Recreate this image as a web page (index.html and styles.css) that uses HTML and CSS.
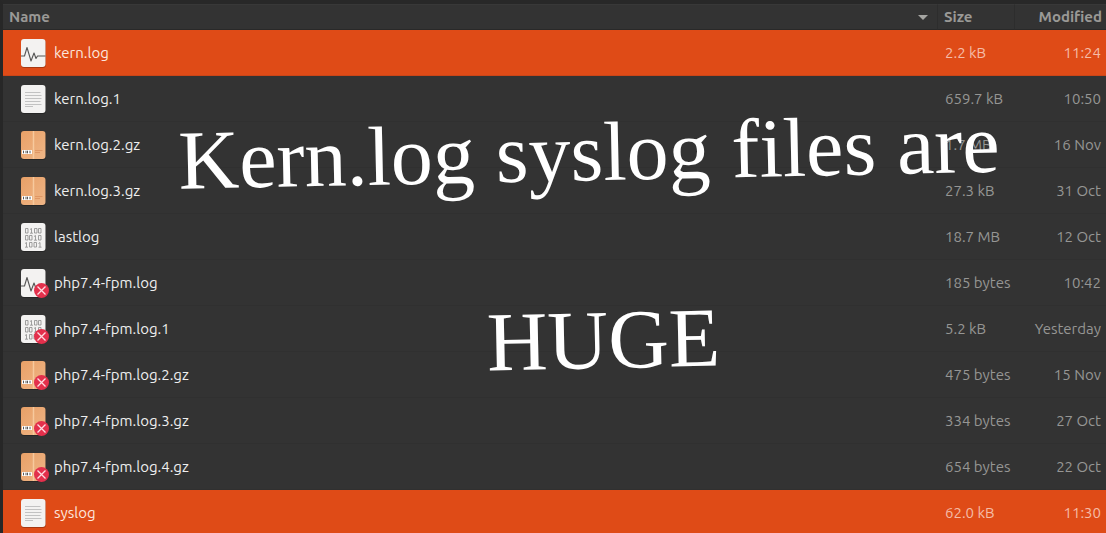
FILE: index.html
```html
<!DOCTYPE html>
<html lang="en">
<head>
<meta charset="utf-8">
<title>Log files</title>
<link rel="stylesheet" href="styles.css">
</head>
<body>
<svg class="defs" aria-hidden="true">
  <defs>
    <linearGradient id="box" x1="0" y1="0" x2="1" y2="1"><stop offset="0" stop-color="#e8a067"/><stop offset="1" stop-color="#efb687"/></linearGradient>
    <symbol id="sheet" viewBox="0 0 28 30"><rect x="0" y="1.5" width="25" height="28.5" rx="3.5" fill="#000" opacity=".25"/><rect x="0" y="1" width="24.5" height="28" rx="3" fill="#f3f2f1"/></symbol>
    <symbol id="log" viewBox="0 0 28 30"><use href="#sheet"/><path d="M0 18H3.500L6 9.500 10 23 13 15 15 20.500 16.500 18H24.500" fill="none" stroke="#555" stroke-width="1.1" stroke-linejoin="round"/></symbol>
    <symbol id="text" viewBox="0 0 28 30"><use href="#sheet"/><path d="M4 8.500H19.500M4 11.500H20.500M4 14.500H20.500M4 17.500H19.500M4 20.500H20.500M4 22.500H12" stroke="#c2c2c2" stroke-width="1"/></symbol>
    <symbol id="archive" viewBox="0 0 28 30"><rect x="0" y="1.5" width="25" height="28.5" rx="3.5" fill="#000" opacity=".25"/><rect y="1" width="24.5" height="28" rx="3" fill="url(#box)"/><path d="M12.500 1V29" stroke="#f7c99d" stroke-width="1.5"/><path d="M14 20.500H21.500M14 22.500H19" stroke="#dc915e" stroke-width=".8"/><rect x="1" y="20" width="10" height="4" rx=".5" fill="#fff"/><path d="M2.500 20.700V23.300M5 20.700V23.300M6.500 20.700V23.300M9 20.700V23.300" stroke="#444" stroke-width=".9"/></symbol>
    <symbol id="binary" viewBox="0 0 28 30"><use href="#sheet"/><g fill="none" stroke="#8a8a8a" stroke-width=".8"><path d="M4.500 6.500h2.500v4.500h-2.500zM13.500 6.500h2.500v4.500h-2.500zM17.500 6.500h2.500v4.500h-2.500zM4.500 13.500h2.500v4.500h-2.500zM8.500 13.500h2.500v4.500h-2.500zM17.500 13.500h2.500v4.500h-2.500zM8.500 20.500h2.500v4.500h-2.500zM13 20.500h2.500v4.500h-2.500z"/><path d="M9 7.500L10.500 6.500V11M9 11.200h3M13 14.500L14.500 13.500V18M13 18.200h3M4 21.500L5.500 20.500V25M4 25.200h3M17.500 21.500L19 20.500V25M17.500 25.200h3"/></g></symbol>
    <symbol id="denied" viewBox="0 0 28 30"><circle cx="20.500" cy="22.500" r="7.500" fill="#e3304c"/><path d="M16.500 18.500L24.500 26.500M24.500 18.500L16.500 26.500" stroke="#ffdce2" stroke-width="1.3"/></symbol>
  </defs>
</svg>
<main class="window">
  <table class="files">
    <colgroup><col><col class="col-size"><col class="col-modified"></colgroup>
    <thead>
      <tr>
        <th scope="col" aria-sort="descending"><button class="sort" type="button">Name<svg class="arrow" viewBox="0 0 10 5" aria-hidden="true"><path d="M0 0H10L5 5Z"/></svg></button></th>
        <th scope="col"><button class="sort" type="button">Size</button></th>
        <th scope="col"><button class="sort end" type="button">Modified</button></th>
      </tr>
    </thead>
    <tbody>
      <tr class="selected"><td><div class="file"><svg class="icon"><use href="#log"/></svg>kern.log</div></td><td>2.2 kB</td><td>11:24</td></tr>
      <tr><td><div class="file"><svg class="icon"><use href="#text"/></svg>kern.log.1</div></td><td>659.7 kB</td><td>10:50</td></tr>
      <tr><td><div class="file"><svg class="icon"><use href="#archive"/></svg>kern.log.2.gz</div></td><td>1.7 MB</td><td>16 Nov</td></tr>
      <tr><td><div class="file"><svg class="icon"><use href="#archive"/></svg>kern.log.3.gz</div></td><td>27.3 kB</td><td>31 Oct</td></tr>
      <tr><td><div class="file"><svg class="icon"><use href="#binary"/></svg>lastlog</div></td><td>18.7 MB</td><td>12 Oct</td></tr>
      <tr><td><div class="file"><svg class="icon"><use href="#log"/><use href="#denied"/></svg>php7.4-fpm.log</div></td><td>185 bytes</td><td>10:42</td></tr>
      <tr><td><div class="file"><svg class="icon"><use href="#binary"/><use href="#denied"/></svg>php7.4-fpm.log.1</div></td><td>5.2 kB</td><td>Yesterday</td></tr>
      <tr><td><div class="file"><svg class="icon"><use href="#archive"/><use href="#denied"/></svg>php7.4-fpm.log.2.gz</div></td><td>475 bytes</td><td>15 Nov</td></tr>
      <tr><td><div class="file"><svg class="icon"><use href="#archive"/><use href="#denied"/></svg>php7.4-fpm.log.3.gz</div></td><td>334 bytes</td><td>27 Oct</td></tr>
      <tr><td><div class="file"><svg class="icon"><use href="#archive"/><use href="#denied"/></svg>php7.4-fpm.log.4.gz</div></td><td>654 bytes</td><td>22 Oct</td></tr>
      <tr class="selected"><td><div class="file"><svg class="icon"><use href="#text"/></svg>syslog</div></td><td>62.0 kB</td><td>11:30</td></tr>
    </tbody>
  </table>
  <h1 class="caption"><span>Kern.log syslog files are</span><span class="second">HUGE</span></h1>
</main>
</body>
</html>
```
FILE: styles.css
```css
* {
  box-sizing: border-box;
}

body {
  margin: 0;
  overflow: hidden;
  background: #333;
  color: #eee;
  font: 15px/20px Ubuntu, "Noto Sans", sans-serif;
}

.defs {
  position: absolute;
  width: 0;
  height: 0;
}

.window {
  position: relative;
  height: 100vh;
  overflow: hidden;
  border-top: 4px solid #282828;
  border-left: 3px solid #272727;
}

.files {
  width: 100%;
  table-layout: fixed;
  border-collapse: separate;
  border-spacing: 0;
}

.col-size {
  width: 77px;
}

.col-modified {
  width: 91px;
}

th {
  height: 26px;
  padding: 0;
  border-top: 1px solid #383838;
  border-bottom: 1px solid #292929;
  border-right: 1px solid #2d2d2d;
}

th:last-child {
  border-right: 0;
}

.sort {
  display: flex;
  align-items: center;
  justify-content: space-between;
  width: 100%;
  height: 24px;
  padding: 0 9px 0 6px;
  border: 0;
  background: none;
  color: #9a9996;
  font: inherit;
  font-weight: 700;
}

.end {
  justify-content: flex-end;
  padding-right: 4px;
}

.arrow {
  width: 10px;
  height: 5px;
  fill: #a5a5a2;
}

td {
  height: 46px;
  padding: 0 0 0 7px;
  border-bottom: 1px solid #303030;
  color: #969694;
  white-space: nowrap;
}

td:first-child {
  padding-left: 18px;
  color: #eee;
}

td:last-child {
  padding: 0 5px 0 0;
  text-align: right;
}

.selected td {
  border-color: #cb4518;
  background: #df4b17;
  color: #f5bca7;
}

.selected td:first-child {
  color: #fce6dd;
}

.file {
  display: flex;
  align-items: center;
  gap: 5px;
}

.icon {
  width: 28px;
  height: 30px;
}

.caption {
  position: absolute;
  inset: 55px 0 auto;
  display: flex;
  flex-direction: column;
  align-items: center;
  margin: 0;
  padding-right: 70px;
  padding-left: 143px;
  color: #fff;
  font: 84px/188px "Liberation Serif", serif;
  white-space: nowrap;
  transform: rotate(-1.2deg);
  pointer-events: none;
}

.second {
  padding-left: 21px;
}
```
